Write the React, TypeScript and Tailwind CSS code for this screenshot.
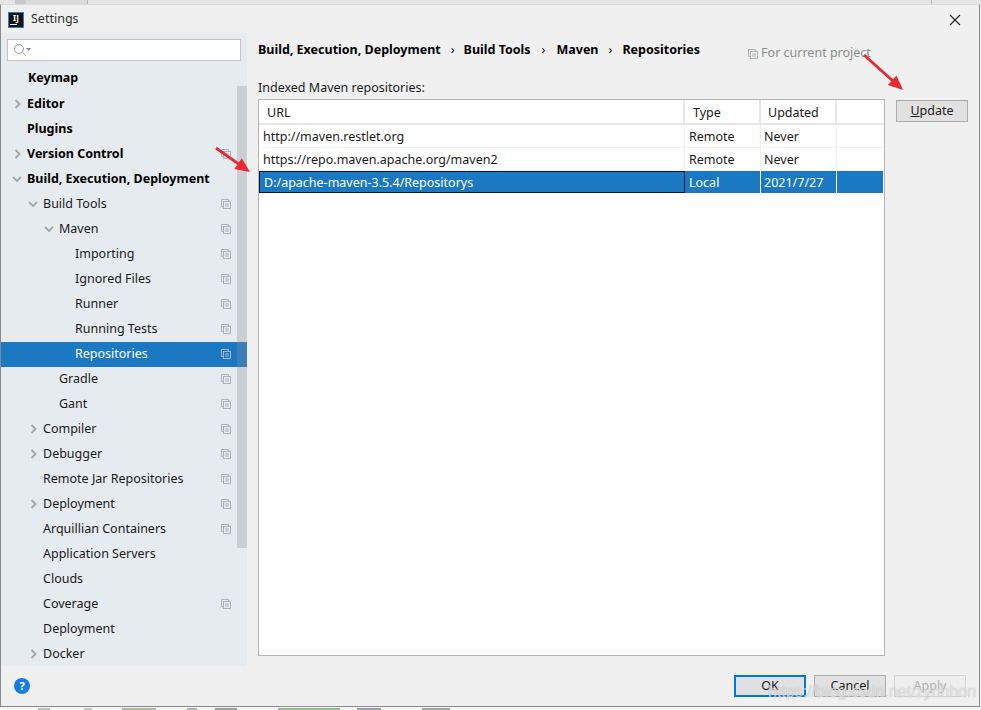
import React from "react";

function Copy({ className = "" }: { className?: string }) {
  return (
    <svg width="10" height="10" viewBox="0 0 10 10" fill="none" className={className}>
      <path d="M2.5 7.5H0.5V0.5H7.5V2.5" stroke="#abb3b9" strokeWidth="1" />
      <rect x="2.5" y="2.5" width="7" height="7" stroke="#abb3b9" strokeWidth="1" />
      <path d="M4 5H8M4 7H8" stroke="#abb3b9" strokeWidth="1" />
    </svg>
  );
}

function Chevron({ open }: { open: boolean }) {
  return (
    <svg width="10" height="10" viewBox="0 0 10 10" fill="none" className="shrink-0">
      {open ? (
        <path d="M1 3L5 7L9 3" stroke="#a4a4a4" strokeWidth="1.8" />
      ) : (
        <path d="M3.5 1L7.5 5L3.5 9" stroke="#a4a4a4" strokeWidth="1.8" />
      )}
    </svg>
  );
}

type Row = { t: string; l: number; b?: boolean; c?: "o" | "c"; copy?: boolean; sel?: boolean };
const rows: Row[] = [
  { t: "Keymap", l: 28, b: true },
  { t: "Editor", l: 27, b: true, c: "c" },
  { t: "Plugins", l: 27, b: true },
  { t: "Version Control", l: 27, b: true, c: "c", copy: true },
  { t: "Build, Execution, Deployment", l: 27, b: true, c: "o" },
  { t: "Build Tools", l: 43, c: "o", copy: true },
  { t: "Maven", l: 59, c: "o", copy: true },
  { t: "Importing", l: 75, copy: true },
  { t: "Ignored Files", l: 75, copy: true },
  { t: "Runner", l: 75, copy: true },
  { t: "Running Tests", l: 75, copy: true },
  { t: "Repositories", l: 75, copy: true, sel: true },
  { t: "Gradle", l: 59, copy: true },
  { t: "Gant", l: 59, copy: true },
  { t: "Compiler", l: 43, c: "c", copy: true },
  { t: "Debugger", l: 43, c: "c", copy: true },
  { t: "Remote Jar Repositories", l: 43, copy: true },
  { t: "Deployment", l: 43, c: "c", copy: true },
  { t: "Arquillian Containers", l: 43, copy: true },
  { t: "Application Servers", l: 43 },
  { t: "Clouds", l: 43 },
  { t: "Coverage", l: 43, copy: true },
  { t: "Deployment", l: 43 },
  { t: "Docker", l: 43, c: "c" },
];

const tableRows = [
  ["http://maven.restlet.org", "Remote", "Never"],
  ["https://repo.maven.apache.org/maven2", "Remote", "Never"],
  ["D:/apache-maven-3.5.4/Repositorys", "Local", "2021/7/27"],
];

const bottomBits: [number, number, string][] = [
  [13, 12, "#8a8a8a"],
  [34, 8, "#9a9a9a"],
  [30, 34, "#6d7a3a"],
  [31, 10, "#5a6a80"],
  [18, 22, "#444444"],
  [41, 62, "#2e7d32"],
  [17, 24, "#2f4f4f"],
  [41, 28, "#555555"],
];

function Arrow({ className, x1, y1, x2, y2 }: { className: string; x1: number; y1: number; x2: number; y2: number }) {
  const a = Math.atan2(y2 - y1, x2 - x1);
  const len = 16;
  const p = (ang: number, l: number) => `${x2 - l * Math.cos(a + ang)},${y2 - l * Math.sin(a + ang)}`;
  return (
    <svg width="60" height="60" viewBox="0 0 60 60" className={className}>
      <line x1={x1} y1={y1} x2={x2 - 6 * Math.cos(a)} y2={y2 - 6 * Math.sin(a)} stroke="#ea2a2e" strokeWidth="2.8" />
      <polygon points={`${x2},${y2} ${p(0.42, len)} ${p(-0.42, len)}`} fill="#ea2a2e" />
    </svg>
  );
}

export default function App() {
  return (
    <div
      className="relative w-[981px] h-[710px] overflow-hidden bg-[#f3f3f3] text-[12.5px] text-[#1a1a1a] flex flex-col"
      style={{ fontFamily: '"Noto Sans", sans-serif' }}
    >
      <div className="h-[4px] shrink-0 bg-[#e6e6e6] flex">
        <div className="w-[15px]" />
        <div className="w-[11px] bg-[#c9c9c9]" />
        <div className="w-[62px] bg-[#dadada] border-r border-[#b5b5b5]" />
        <div className="w-[844px] border-r border-[#b5b5b5]" />
      </div>
      <div className="h-[703px] shrink-0 w-[980px] border border-[#8a8a8a] border-t-[#dcdcdc] bg-[#f0f0f0] flex flex-col">
        <div className="h-[28px] shrink-0 flex items-center pl-[7px] pr-[18px] pt-[1px]">
          <div className="w-[16px] h-[16px] bg-[#111] border border-[#1c7fd6] flex flex-col items-center text-white text-[8px] font-bold leading-[9px] mr-[7px]">
            <span>IJ</span>
            <span className="block w-[7px] h-[1px] bg-white self-start ml-[1px] mt-[2px]" />
          </div>
          <span className="text-[#333]">Settings</span>
          <svg width="12" height="12" viewBox="0 0 12 12" className="ml-auto">
            <path d="M1 1L11 11M11 1L1 11" stroke="#222" strokeWidth="1.1" fill="none" />
          </svg>
        </div>
        <div className="flex flex-1 min-h-0">
          <aside className="relative w-[246px] shrink-0 bg-[#e6ebf0] flex flex-col overflow-hidden">
            <div className="mx-[6px] mt-[6px] h-[22px] shrink-0 bg-white border border-[#bfc3c6] flex items-center pl-[5px]">
              <svg width="18" height="14" viewBox="0 0 18 14" fill="none">
                <circle cx="6" cy="6" r="4.5" stroke="#9a9a9a" />
                <path d="M9.5 9.5L13 13" stroke="#9a9a9a" />
                <path d="M13 5H18L15.5 8Z" fill="#8a8a8a" />
              </svg>
            </div>
            <div className="mt-[4px] flex flex-col">
              {rows.map((r, i) => (
                <div
                  key={i}
                  className={
                    "relative flex items-center pr-[16px] " +
                    (r.sel ? "bg-[#1b78c3] text-white " : "") +
                    (i === 0 ? "h-[27px] pb-[1px]" : "h-[25px]")
                  }
                >
                  {r.c && (
                    <span className="absolute top-[7px]" style={{ left: r.l - 16 }}>
                      <Chevron open={r.c === "o"} />
                    </span>
                  )}
                  <span className={r.b ? "font-bold text-black" : ""} style={{ marginLeft: r.l - 1 }}>
                    {r.t}
                  </span>
                  {r.copy && <Copy className="ml-auto -mt-[2px]" />}
                </div>
              ))}
            </div>
            <div className="absolute right-0 top-[53px] w-[10px] h-[462px] bg-[#8a8f94]/30" />
          </aside>
          <main className="flex-1 min-w-0 pl-[11px] pr-[11px] flex flex-col">
            <div className="h-[33px] shrink-0 flex items-center">
              <div className="flex items-center font-bold text-black pt-[2px]">
                <span>Build, Execution, Deployment</span>
                <span className="ml-[10px] mr-[9px] font-normal">›</span>
                <span>Build Tools</span>
                <span className="ml-[11px] mr-[11px] font-normal">›</span>
                <span>Maven</span>
                <span className="mx-[10px] font-normal">›</span>
                <span>Repositories</span>
              </div>
              <div className="ml-[48px] mt-[8px] flex items-center gap-[3px] text-[#8c8c8c]">
                <Copy />
                <span>For current project</span>
              </div>
            </div>
            <div className="mt-[12px] h-[20px] shrink-0 flex items-center">Indexed Maven repositories:</div>
            <div className="mt-[1px] flex flex-1 min-h-0 items-start mb-[10px] self-stretch">
              <div className="w-[627px] h-full bg-white border border-[#b4b4b4] shrink-0">
                <div className="flex h-[25px] border-b-2 border-[#e6e6e6]">
                  <div className="w-[426px] pl-[8px] pt-[3px] border-r-2 border-[#e6e6e6] flex items-center">URL</div>
                  <div className="w-[76px] pl-[8px] pt-[3px] border-r-2 border-[#e6e6e6] flex items-center">Type</div>
                  <div className="w-[76px] pl-[7px] pt-[3px] border-r-2 border-[#e6e6e6] flex items-center">Updated</div>
                </div>
                {tableRows.map((r, i) => (
                  <div key={i} className={"flex " + (i === 2 ? "h-[22px] bg-[#1b78c3] text-white mr-px" : "h-[23px] border-b border-[#f3f3f3]")}>
                    <div className={"w-[426px] pl-[4px] pt-[2px] flex items-center border-r " + (i === 2 ? "border border-[#0b1a2a]" : "border-[#f0f0f0]")}>
                      {r[0]}
                    </div>
                    <div className={"w-[76px] pl-[4px] pt-[2px] flex items-center border-r " + (i === 2 ? "border-white" : "border-[#f0f0f0]")}>
                      {r[1]}
                    </div>
                    <div className={"w-[76px] pl-[3px] pt-[2px] flex items-center border-r " + (i === 2 ? "border-white" : "border-[#f0f0f0]")}>
                      {r[2]}
                    </div>
                  </div>
                ))}
              </div>
              <button className="ml-[11px] mt-[1px] w-[72px] h-[22px] shrink-0 bg-[#e1e1e1] border border-[#adadad] text-[#222] flex items-center justify-center">
                <span className="underline">U</span>pdate
              </button>
            </div>
          </main>
        </div>
        <div className="h-[40px] shrink-0 flex items-center pl-[13px] pr-[13px]">
          <div className="w-[16px] h-[16px] rounded-full bg-[#1a7ddb] text-white text-[11px] font-bold flex items-center justify-center">?</div>
          <div className="ml-auto flex gap-[8px]">
            <button className="w-[72px] h-[22px] bg-[#e1e1e1] border-2 border-[#0078d7] text-[#222]">OK</button>
            <button className="w-[72px] h-[22px] bg-[#e1e1e1] border border-[#adadad] text-[#222]">Cancel</button>
            <button className="w-[72px] h-[22px] bg-[#eeeeee] border border-[#d4d4d4] text-[#b0b0b0]">Apply</button>
          </div>
        </div>
      </div>
      <div className="h-[3px] shrink-0 bg-[#f5f5f5] flex items-end pl-[25px]">
        {bottomBits.map(([ml, w, c], i) => (
          <div key={i} className="h-[2px] opacity-50" style={{ marginLeft: ml, width: w, background: c }} />
        ))}
      </div>
      <Arrow className="absolute left-[205px] top-[135px]" x1={11} y1={13} x2={45} y2={37} />
      <Arrow className="absolute left-[855px] top-[45px]" x1={9} y1={10} x2={48} y2={45} />
      <div
        className="absolute left-[768px] top-[683px] text-[16px] leading-[18px] text-white/60"
        style={{ fontFamily: '"Liberation Sans", sans-serif', textShadow: "0 0 1px rgba(120,120,120,0.6)" }}
      >
        https://blog.csdn.net/zynhhon
      </div>
    </div>
  );
}
